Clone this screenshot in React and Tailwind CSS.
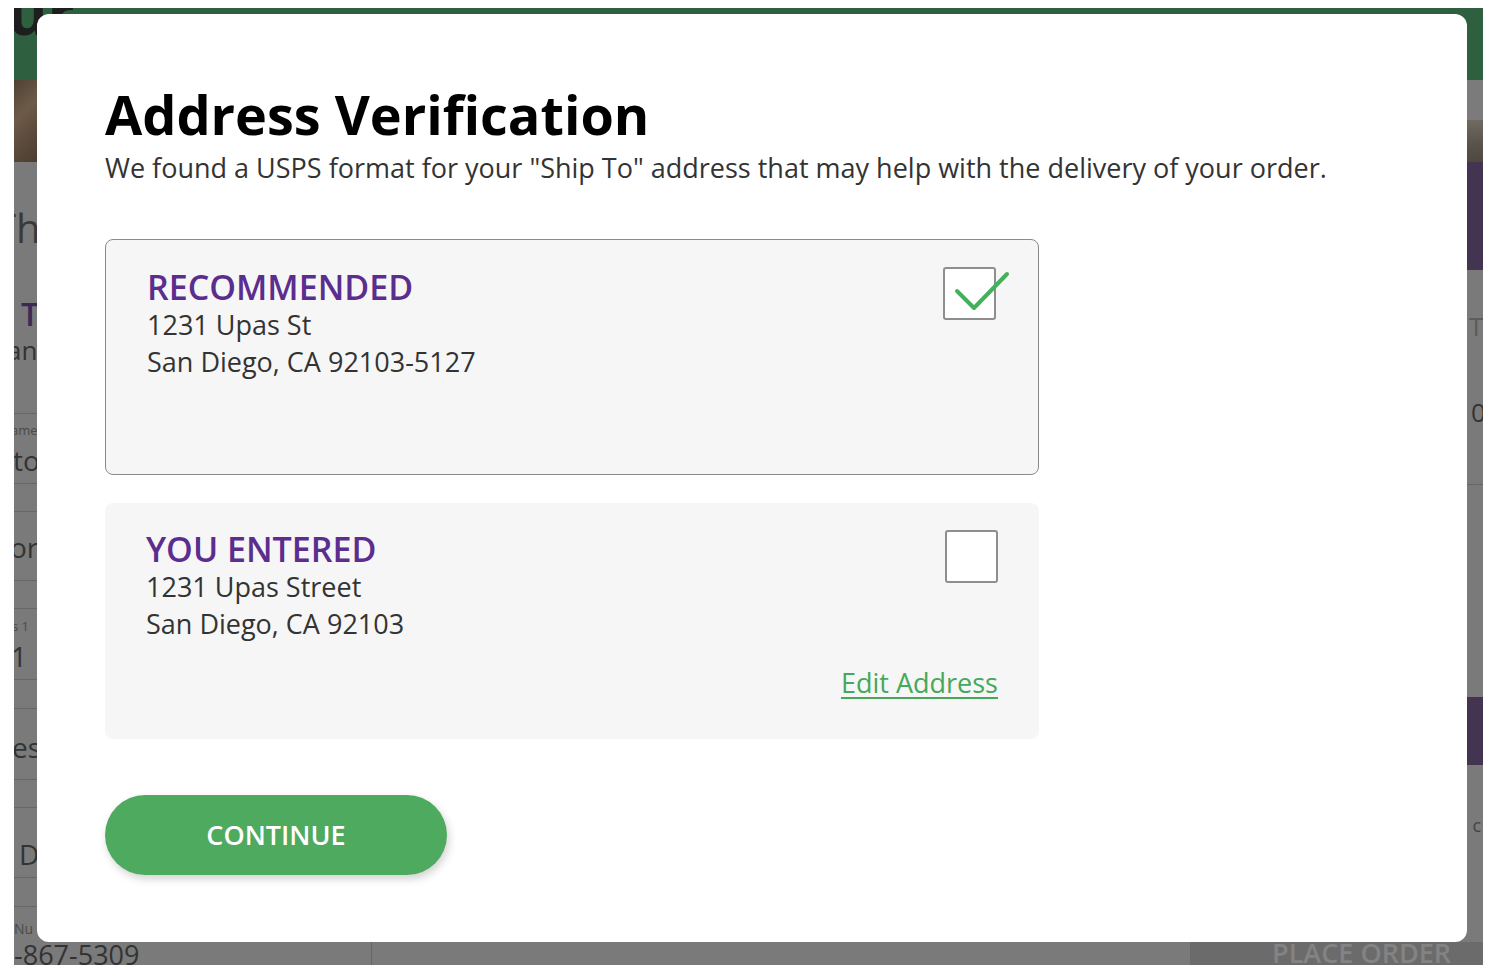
import React from "react";

const font = { fontFamily: '"Open Sans", "Liberation Sans", sans-serif' };

function Line() {
  return <div className="h-px w-full shrink-0 bg-[#676767]" />;
}

function LeftStrip() {
  return (
    <div className="flex w-[23px] shrink-0 flex-col overflow-hidden text-[#333]">
      <div className="h-[82px] w-full shrink-0 bg-[#5b4c3e] bg-[linear-gradient(135deg,#4e4134_0%,#6d5b48_40%,#5a4a3b_70%,#4a3d31_100%)]" />
      <div className="h-[46px] shrink-0" />
      <div className="h-[40px] shrink-0 whitespace-nowrap text-[40px] leading-[40px] ml-[-20px] text-[#3a3a3a]">Th</div>
      <div className="h-[50px] shrink-0" />
      <div className="h-[32px] shrink-0 whitespace-nowrap pl-[7px] text-[32px] font-semibold leading-[32px] text-[#3b2a55]">T</div>
      <div className="h-[40px] shrink-0 whitespace-nowrap ml-[-7px] text-[26px] leading-[40px] text-[#333]">an</div>
      <div className="h-[43px] shrink-0" />
      <Line />
      <div className="h-[25px] shrink-0 whitespace-nowrap pt-[7px] ml-[-3px] text-[13px] leading-[18px] text-[#4a4a4a]">ame</div>
      <div className="h-[36px] shrink-0 whitespace-nowrap pt-[3px] ml-[-1px] text-[28px] leading-[36px] text-[#333]">to</div>
      <div className="h-[8px] shrink-0" />
      <Line />
      <div className="h-[27px] shrink-0" />
      <Line />
      <div className="h-[17px] shrink-0" />
      <div className="h-[36px] shrink-0 whitespace-nowrap ml-[-4px] text-[28px] leading-[36px] text-[#333]">or</div>
      <div className="h-[15px] shrink-0" />
      <Line />
      <div className="h-[27px] shrink-0" />
      <Line />
      <div className="h-[26px] shrink-0 whitespace-nowrap pt-[8px] ml-[-2px] text-[13px] leading-[18px] text-[#4a4a4a]">s 1</div>
      <div className="h-[40px] shrink-0 whitespace-nowrap pt-[3px] ml-[-3px] text-[28px] leading-[36px] text-[#333]">1</div>
      <div className="h-[4px] shrink-0" />
      <Line />
      <div className="h-[28px] shrink-0" />
      <Line />
      <div className="h-[20px] shrink-0" />
      <div className="h-[36px] shrink-0 whitespace-nowrap ml-[-2px] text-[28px] leading-[36px] text-[#333]">es</div>
      <div className="h-[14px] shrink-0" />
      <Line />
      <div className="h-[27px] shrink-0" />
      <Line />
      <div className="h-[28px] shrink-0" />
      <div className="h-[36px] shrink-0 whitespace-nowrap pl-[5px] text-[28px] leading-[36px] text-[#333]">D</div>
      <div className="h-[5px] shrink-0" />
      <Line />
      <div className="h-[28px] shrink-0" />
      <Line />
      <div className="h-[30px] shrink-0 whitespace-nowrap pt-[14px] text-[14px] leading-[16px] text-[#4a4a4a]">Nu</div>
    </div>
  );
}

function RightStrip() {
  return (
    <div className="flex w-[16px] shrink-0 flex-col overflow-hidden">
      <div className="h-[40px] shrink-0 bg-[#7b7b7b]" />
      <div className="h-[42px] shrink-0 bg-[linear-gradient(180deg,#6f6a62_0%,#59524a_60%,#4f4840_100%)]" />
      <div className="h-[108px] shrink-0 bg-[#433551]" />
      <div className="h-[41px] shrink-0" />
      <div className="h-[30px] shrink-0 whitespace-nowrap pl-[2px] text-[26px] leading-[30px] text-[#5c5c5c]">T</div>
      <div className="h-[56px] shrink-0" />
      <div className="h-[30px] shrink-0 whitespace-nowrap pl-[4px] text-[26px] leading-[30px] text-[#333]">0</div>
      <div className="h-[57px] shrink-0" />
      <Line />
      <div className="h-[212px] shrink-0" />
      <div className="h-[68px] shrink-0 bg-[#433551]" />
      <div className="h-[50px] shrink-0" />
      <div className="h-[20px] shrink-0 whitespace-nowrap ml-[-4px] text-[18px] leading-[20px] text-[#444]">: c</div>
    </div>
  );
}

function Checkbox({ checked }) {
  return (
    <div className="relative h-[53px] w-[53px] shrink-0 rounded-[3px] border-[2px] border-[#8e8e8e] bg-white">
      {checked && (
        <svg
          className="absolute left-[-2px] top-[-2px] overflow-visible"
          width="70"
          height="50"
          viewBox="0 0 70 50"
          fill="none"
        >
          <polyline
            points="14,24 31,41 64,7"
            stroke="#43b05c"
            strokeWidth="4"
            strokeLinecap="round"
            strokeLinejoin="round"
          />
        </svg>
      )}
    </div>
  );
}

export default function App() {
  return (
    <div className="relative h-[978px] w-[1510px] overflow-hidden bg-white" style={font}>
      {/* Background page under overlay */}
      <div className="absolute left-[14px] top-[8px] flex h-[957px] w-[1469px] flex-col bg-[#7a7a7a]">
        <div className="h-[72px] shrink-0 overflow-hidden bg-[#2e5f3f]">
          <div className="ml-[-6px] mt-[-26px] whitespace-nowrap text-[60px] font-bold leading-[60px] text-[#1e1e1e]">
            ur
          </div>
        </div>
        <div className="flex min-h-0 flex-1">
          <LeftStrip />
          <div className="flex-1" />
          <RightStrip />
        </div>
        <div className="flex h-[23px] shrink-0 items-stretch">
          <div className="w-[358px] whitespace-nowrap border-r border-[#666] text-[27px] leading-[26px] text-[#333]">
            -867-5309
          </div>
          <div className="flex-1" />
          <div className="flex w-[293px] items-end justify-end bg-[#6b6b6b] pr-[32px]">
            <span className="whitespace-nowrap text-[27px] font-semibold leading-[24px] text-[#838383]">
              PLACE ORDER
            </span>
          </div>
        </div>
      </div>

      {/* Modal */}
      <div className="absolute left-[37px] top-[14px] h-[928px] w-[1430px] rounded-[12px] bg-white pl-[68px] pt-[73px]">
        <h1 className="text-[54px] font-bold leading-[54px] text-black">Address Verification</h1>
        <p className="mt-[13px] text-[27px] leading-[27px] text-[#333]">
          We found a USPS format for your "Ship To" address that may help with the delivery of your order.
        </p>

        <div className="mt-[58px] flex h-[236px] w-[934px] justify-between rounded-[8px] border-[1.5px] border-[#8a8a8a] bg-[#f6f6f6] pl-[41px] pr-[42px] pt-[27px]">
          <div className="pt-[2px]">
            <div className="text-[34px] font-semibold leading-[37px] text-[#5b2d8e]">RECOMMENDED</div>
            <div className="text-[27px] leading-[37px] text-[#333]">1231 Upas St</div>
            <div className="text-[27px] leading-[37px] text-[#333]">San Diego, CA 92103-5127</div>
          </div>
          <Checkbox checked />
        </div>

        <div className="mt-[28px] flex h-[236px] w-[934px] flex-col rounded-[8px] bg-[#f6f6f6] pl-[41px] pr-[41px] pt-[27px]">
          <div className="flex justify-between">
            <div className="pt-[1px]">
              <div className="text-[34px] font-semibold leading-[37px] text-[#5b2d8e]">YOU ENTERED</div>
              <div className="text-[27px] leading-[37px] text-[#333]">1231 Upas Street</div>
              <div className="text-[27px] leading-[37px] text-[#333]">San Diego, CA 92103</div>
            </div>
            <Checkbox />
          </div>
          <div className="mt-[22px] flex justify-end">
            <a className="text-[27px] leading-[37px] text-[#45a85a] underline decoration-[1.5px] underline-offset-[4px]" href="#">
              Edit Address
            </a>
          </div>
        </div>

        <button className="mt-[56px] flex h-[80px] w-[342px] items-center justify-center rounded-full bg-[#4daa5f] text-[27px] font-semibold text-white shadow-[2px_4px_8px_rgba(0,0,0,0.18)]">
          CONTINUE
        </button>
      </div>
    </div>
  );
}
